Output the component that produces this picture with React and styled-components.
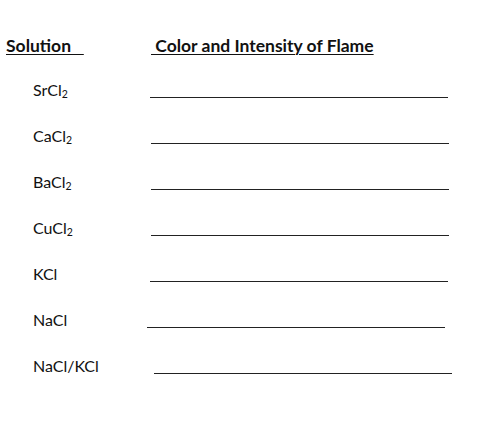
import styled, { createGlobalStyle } from 'styled-components';

const GlobalStyle = createGlobalStyle`
  html, body {
    margin: 0;
    padding: 0;
    background: #ffffff;
  }
  body {
    font-family: Lato, "Open Sans", "Liberation Sans", sans-serif;
    color: #111111;
  }
`;

const Sheet = styled.div`
  width: 480px;
  height: 433px;
  padding: 35px 0 0 6px;
  box-sizing: border-box;
`;

const HeaderRow = styled.div`
  display: flex;
  align-items: baseline;
  height: 21px;
  padding-top: 1px;
`;

const HeaderCell = styled.span`
  display: block;
  width: ${(p) => p.$width}px;
  font-size: 17.5px;
  font-weight: 700;
  line-height: 20px;
  white-space: pre;
  text-decoration: underline;
  text-decoration-thickness: 1px;
  text-underline-offset: 2px;
`;

const Rows = styled.div`
  display: flex;
  flex-direction: column;
  padding-left: 27px;
`;

const Row = styled.div`
  display: flex;
  align-items: flex-end;
  height: 46px;
`;

const Label = styled.span`
  width: 117px;
  font-size: 16px;
  line-height: 18px;
  margin-bottom: 4px;

  sub {
    font-size: 10.5px;
    vertical-align: -2px;
    line-height: 0;
  }
`;

const BlankLine = styled.span`
  width: 298px;
  height: 0;
  border-bottom: 1.5px solid #222222;
  margin-left: ${(p) => p.$shift}px;
  margin-bottom: 5px;
`;

const solutions = [
  { name: 'SrCl', sub: '2', shift: 0 },
  { name: 'CaCl', sub: '2', shift: 1 },
  { name: 'BaCl', sub: '2', shift: 1 },
  { name: 'CuCl', sub: '2', shift: 1 },
  { name: 'KCl', shift: 0 },
  { name: 'NaCl', shift: -3 },
  { name: 'NaCl/KCl', shift: 4 },
];

export default function App() {
  return (
    <Sheet>
      <GlobalStyle />
      <HeaderRow>
        <HeaderCell $width={145}>{'Solution   '}</HeaderCell>
        <HeaderCell $width={300}>{' Color and Intensity of Flame'}</HeaderCell>
      </HeaderRow>
      <Rows>
        {solutions.map((s) => (
          <Row key={s.name}>
            <Label>
              {s.name}
              {s.sub && <sub>{s.sub}</sub>}
            </Label>
            <BlankLine $shift={s.shift} />
          </Row>
        ))}
      </Rows>
    </Sheet>
  );
}
